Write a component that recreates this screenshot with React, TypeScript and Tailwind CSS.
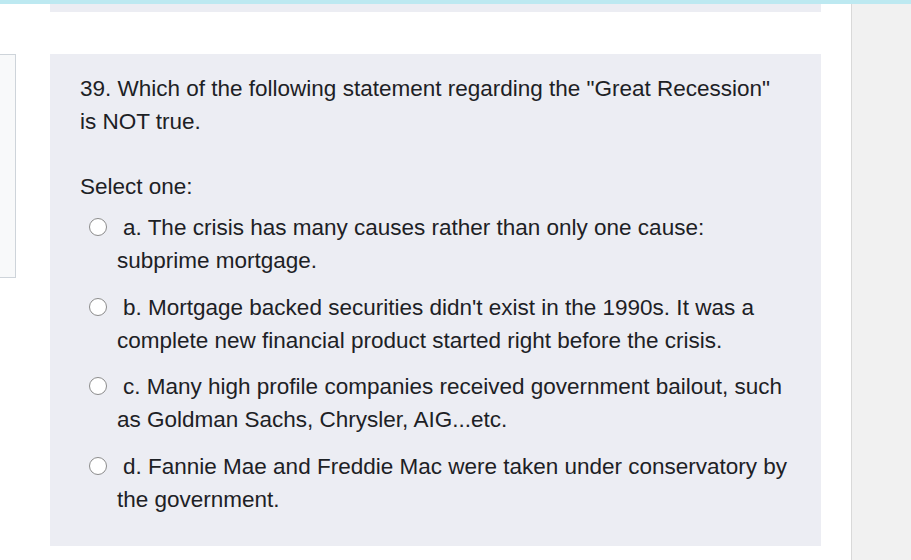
import React from 'react';

type Option = {
  letter: string;
  text: string;
};

const options: Option[] = [
  { letter: 'a.', text: 'The crisis has many causes rather than only one cause: subprime mortgage.' },
  {
    letter: 'b.',
    text: "Mortgage backed securities didn't exist in the 1990s. It was a complete new financial product started right before the crisis.",
  },
  { letter: 'c.', text: 'Many high profile companies received government bailout, such as Goldman Sachs, Chrysler, AIG...etc.' },
  { letter: 'd.', text: 'Fannie Mae and Freddie Mac were taken under conservatory by the government.' },
];

const App: React.FC = () => {
  return (
    <div
      className="w-[911px] h-[560px] overflow-hidden bg-white text-[#1d2125]"
      style={{ fontFamily: '"Liberation Sans", Arial, sans-serif' }}
    >
      {/* top bar */}
      <div className="h-[4px] bg-[#bde9f1]" />

      <div className="flex h-[556px]">
        {/* main column */}
        <div className="w-[851px] flex flex-col">
          <div className="ml-[50px] w-[771px] h-[8px] bg-[#ecedf3]" />

          <div className="flex items-start mt-[42px]">
            {/* edge of the nav block on the left */}
            <div className="w-[16px] h-[224px] bg-[#f8f9fa] border border-l-0 border-[#ced4da]" />

            {/* question card */}
            <div className="ml-[34px] w-[771px] h-[492px] bg-[#ecedf3] pl-[30px] pr-[31px] pt-[18px] text-[22.5px] leading-[33px]">
              <p>39. Which of the following statement regarding the "Great Recession" is NOT true.</p>

              <p className="mt-[32px]">Select one:</p>

              <div className="mt-[8px] flex flex-col gap-[13.5px]">
                {options.map((o) => (
                  <div key={o.letter} className="pl-[37px] indent-[-28px]">
                    <span className="inline-block align-middle relative top-[-2px] w-[18px] h-[18px] rounded-full border border-[#8c8c8c] bg-white mr-[16px]" />
                    {o.letter} {o.text}
                  </div>
                ))}
              </div>
            </div>
          </div>
        </div>

        {/* right side panel */}
        <div className="flex-1 bg-[#f1f1f1] border-l border-[#d9d9d9]" />
      </div>
    </div>
  );
};

export default App;
